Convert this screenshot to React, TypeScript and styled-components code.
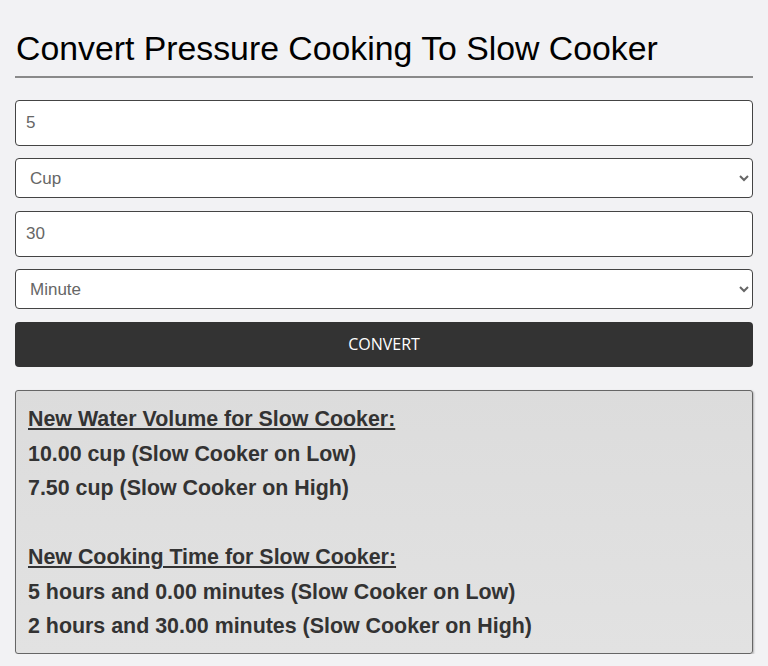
import React from "react";
import styled, { createGlobalStyle } from "styled-components";

const Global = createGlobalStyle`
  html, body { margin: 0; padding: 0; background: #f2f2f4; }
  body { font-family: "Liberation Sans", Arial, sans-serif; }
  * { box-sizing: border-box; }
`;

const Page = styled.div`
  padding: 0 15px;
  display: flex;
  flex-direction: column;
`;

const Title = styled.h1`
  margin: 28px 0 0;
  padding: 0 0 8px 1px;
  font-size: 33.8px;
  font-weight: 400;
  line-height: 40px;
  color: #000;
  border-bottom: 2px solid #8a8a8a;
`;

const Form = styled.div`
  display: flex;
  flex-direction: column;
  margin-top: 22px;
`;

const TextInput = styled.input<{ $mb: number }>`
  height: 46px;
  width: 100%;
  border: 1px solid #444;
  border-radius: 4px;
  background: #fff;
  padding: 0 10px;
  font-family: "Liberation Sans", Arial, sans-serif;
  font-size: 17px;
  color: #666;
  margin-bottom: ${(p) => p.$mb}px;
  outline: none;
`;

const Select = styled.select<{ $mb: number }>`
  height: 40px;
  width: 100%;
  border: 1px solid #444;
  border-radius: 4px;
  background: #fff;
  padding: 0 10px;
  font-family: "Liberation Sans", Arial, sans-serif;
  font-size: 17px;
  color: #666;
  margin-bottom: ${(p) => p.$mb}px;
  outline: none;
`;

const Button = styled.button`
  height: 45px;
  width: 100%;
  border: none;
  border-radius: 4px;
  background: #333;
  color: #fff;
  font-family: "Open Sans", sans-serif;
  font-size: 16px;
  padding: 0 0 2px;
  text-transform: uppercase;
  cursor: pointer;
`;

const Result = styled.div`
  margin-top: 23px;
  border: 1px solid #666;
  border-radius: 3px;
  background: linear-gradient(180deg, #dcdcdc, #e2e2e2);
  box-shadow: 1px 1px 2px rgba(0, 0, 0, 0.25);
  padding: 11px 12px 9px;
  color: #333;
  font-weight: 700;
  font-size: 21.4px;
  line-height: 34.5px;
`;

const Group = styled.div`
  & + & { margin-top: 34.5px; }
`;

const Heading = styled.div`
  text-decoration: underline;
`;

const Line = styled.div``;

export default function App() {
  return (
    <>
      <Global />
      <Page>
        <Title>Convert Pressure Cooking To Slow Cooker</Title>
        <Form>
          <TextInput $mb={12} defaultValue="5" />
          <Select $mb={13} defaultValue="Cup">
            <option>Cup</option>
            <option>Quart</option>
            <option>Liter</option>
          </Select>
          <TextInput $mb={12} defaultValue="30" />
          <Select $mb={13} defaultValue="Minute">
            <option>Minute</option>
            <option>Hour</option>
          </Select>
          <Button>Convert</Button>
        </Form>
        <Result>
          <Group>
            <Heading>New Water Volume for Slow Cooker:</Heading>
            <Line>10.00 cup (Slow Cooker on Low)</Line>
            <Line>7.50 cup (Slow Cooker on High)</Line>
          </Group>
          <Group>
            <Heading>New Cooking Time for Slow Cooker:</Heading>
            <Line>5 hours and 0.00 minutes (Slow Cooker on Low)</Line>
            <Line>2 hours and 30.00 minutes (Slow Cooker on High)</Line>
          </Group>
        </Result>
      </Page>
    </>
  );
}
